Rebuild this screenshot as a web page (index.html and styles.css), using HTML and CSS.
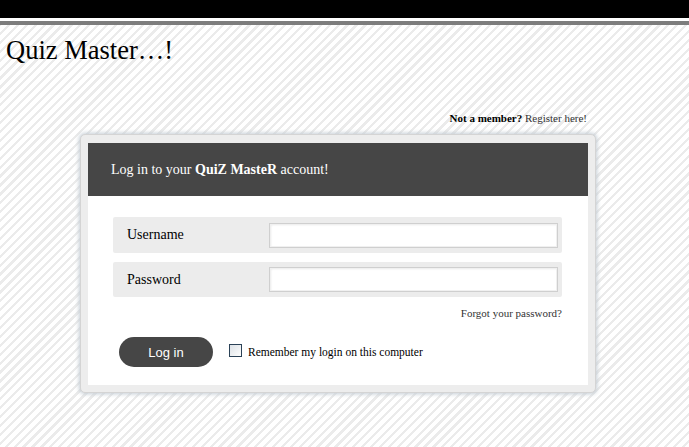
FILE: index.html
```html
<!DOCTYPE html>
<html>
<head>
<meta charset="utf-8">
<title>Quiz Master</title>
<link rel="stylesheet" href="styles.css">
</head>
<body>
<div class="topbar"></div>
<div class="toprule"></div>
<h1 class="site-title">Quiz Master…!</h1>
<div class="login-wrap">
  <p class="register"><b>Not a member?</b> <a href="#">Register here!</a></p>
  <div class="login-box">
    <div class="login-head">Log in to your <b>QuiZ MasteR</b> account!</div>
    <form class="login-body">
      <div class="field">
        <label class="field-label">Username</label>
        <input class="field-input" type="text">
      </div>
      <div class="field">
        <label class="field-label">Password</label>
        <input class="field-input" type="password">
      </div>
      <div class="forgot"><a href="#">Forgot your password?</a></div>
      <div class="actions">
        <button class="btn" type="button">Log in</button>
        <label class="remember"><span class="check"></span>Remember my login on this computer</label>
      </div>
    </form>
  </div>
</div>
</body>
</html>
```
FILE: styles.css
```css
html, body {
  margin: 0;
  padding: 0;
}
body {
  width: 689px;
  height: 447px;
  overflow: hidden;
  font-family: "Liberation Serif", "Times New Roman", serif;
  color: #000;
  background: repeating-linear-gradient(135deg, #ffffff 0 4px, #ebebeb 4px 6.3px);
}
.topbar {
  height: 18px;
  background: #000;
  border-bottom: 3px solid #fff;
}
.toprule {
  height: 4px;
  background: #7d7d7d;
}
.site-title {
  margin: 10px 0 0 6px;
  font-size: 26.5px;
  font-weight: normal;
  line-height: 30px;
  height: 30px;
}
.login-wrap {
  width: 516px;
  margin: 46px 0 0 80px;
}
.register {
  margin: 0;
  padding-right: 9px;
  text-align: right;
  font-size: 11px;
  line-height: 14px;
}
.register b {
  font-weight: 600;
}
.register a {
  color: #333;
  text-decoration: none;
}
.login-box {
  margin-top: 9px;
  padding: 8px 7px 7px;
  background: #ededed;
  border: 1px solid #d4d4d4;
  border-radius: 5px;
  box-shadow: 0 0 4px 1px #c3ccd4;
}
.login-head {
  height: 53px;
  background: #464646;
  color: #fff;
  font-size: 14px;
  line-height: 53px;
  padding-left: 23px;
}
.login-body {
  margin: 0;
  background: #fff;
  padding: 21px 26px 18px 25px;
  display: flex;
  flex-direction: column;
}
.field {
  display: flex;
  align-items: center;
  height: 36px;
  background: #ececec;
  border-radius: 2px;
  padding-right: 4px;
  margin-bottom: 9px;
}
.field + .field {
  margin-bottom: 0;
  height: 35px;
}
.field-label {
  width: 142px;
  padding-left: 14px;
  font-size: 14px;
}
.field-input {
  box-sizing: border-box;
  width: 289px;
  height: 25px;
  margin: 0;
  border: 1px solid #cfcfcf;
  background: #fff;
  box-shadow: inset 0 0 0 1px #f0f0f0, inset 1px 1px 2px #e2e2e2;
  outline: none;
}
.forgot {
  text-align: right;
  font-size: 11px;
  line-height: 14px;
  margin-top: 9px;
}
.forgot a {
  color: #333;
  text-decoration: none;
}
.actions {
  display: flex;
  align-items: center;
  margin-top: 17px;
  padding-left: 6px;
}
.btn {
  width: 94px;
  height: 30px;
  border: none;
  border-radius: 15px;
  background: #464646;
  color: #fff;
  font-family: "Liberation Sans", Arial, sans-serif;
  font-size: 13px;
  padding: 0;
}
.remember {
  display: flex;
  align-items: center;
  margin-left: 16px;
  font-size: 11.5px;
}
.check {
  box-sizing: border-box;
  width: 13px;
  height: 13px;
  border: 1px solid #2b4257;
  background: linear-gradient(135deg, #dde2e7, #fdfdfd);
  margin-right: 6px;
  margin-top: -4px;
}
```
